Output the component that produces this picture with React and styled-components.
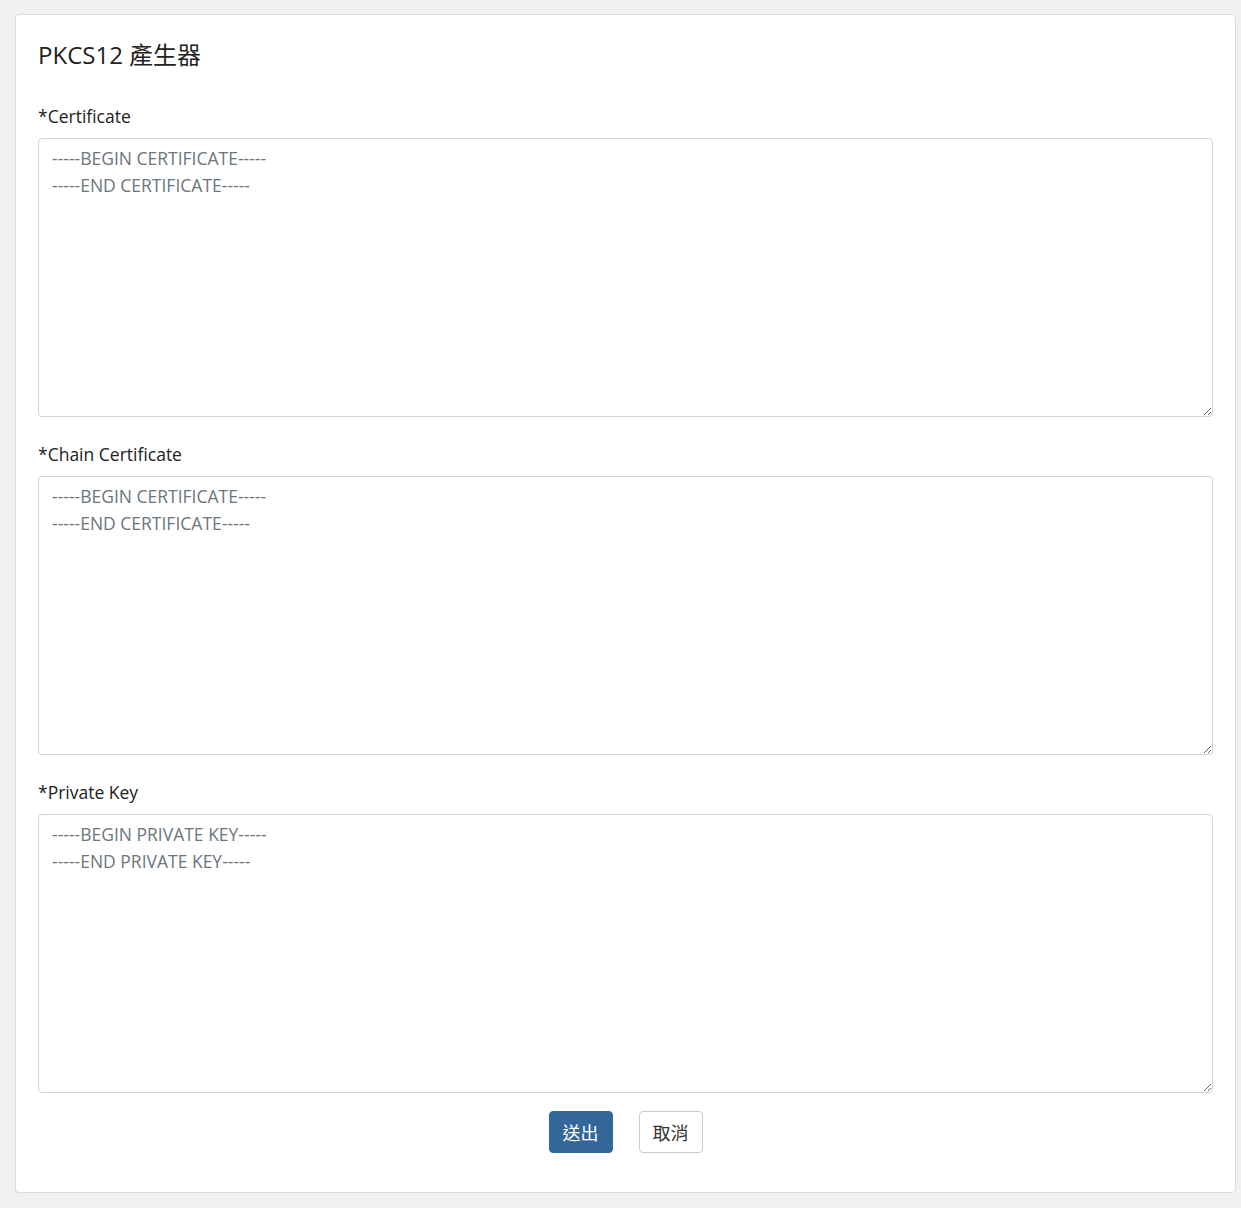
import React from "react";
import styled, { createGlobalStyle } from "styled-components";

const GlobalStyle = createGlobalStyle`
  html, body {
    margin: 0;
    padding: 0;
    background: #f1f1f1;
  }
  body {
    font-family: "Open Sans", "Noto Sans CJK TC", sans-serif;
    color: #333;
  }
  * { box-sizing: border-box; }
`;

const Page = styled.div`
  padding: 14px 5px 15px 15px;
`;

const Card = styled.form`
  background: #fff;
  border: 1px solid #dcdcdc;
  border-radius: 4px;
  padding: 25px 22px 39px 22px;
  display: flex;
  flex-direction: column;
`;

const Title = styled.h1`
  margin: 0 0 34px 0;
  font-size: 24px;
  line-height: 30px;
  font-weight: 400;
  color: #222;
  font-family: "Open Sans", "Noto Sans CJK TC", sans-serif;
`;

const Field = styled.div`
  display: flex;
  flex-direction: column;
  margin-bottom: ${(p) => (p.$last ? "18px" : "25px")};
`;

const Label = styled.label`
  font-size: 17.5px;
  line-height: 24px;
  margin-bottom: 10px;
  color: #222;
`;

const TextArea = styled.textarea`
  display: block;
  width: 100%;
  height: 279px;
  padding: 6px 13px;
  border: 1px solid #ced4da;
  border-radius: 4px;
  font-family: "Open Sans", "Noto Sans CJK TC", sans-serif;
  font-size: 17.5px;
  line-height: 26.5px;
  color: #495057;
  background: #fff;
  resize: vertical;
  outline: none;
  &::placeholder {
    color: #6c757d;
    opacity: 1;
  }
`;

const Actions = styled.div`
  display: flex;
  justify-content: center;
  gap: 26px;
`;

const Button = styled.button`
  height: 42px;
  width: 64px;
  padding: 0;
  border-radius: 4px;
  font-family: "Open Sans", "Noto Sans CJK TC", sans-serif;
  font-size: 18px;
  cursor: pointer;
  border: 1px solid ${(p) => (p.$primary ? "#336699" : "#cccccc")};
  background: ${(p) => (p.$primary ? "#336699" : "#ffffff")};
  color: ${(p) => (p.$primary ? "#ffffff" : "#333333")};
`;

const fields = [
  { id: "cert", label: "*Certificate", ph: "-----BEGIN CERTIFICATE-----\n-----END CERTIFICATE-----" },
  { id: "chain", label: "*Chain Certificate", ph: "-----BEGIN CERTIFICATE-----\n-----END CERTIFICATE-----" },
  { id: "key", label: "*Private Key", ph: "-----BEGIN PRIVATE KEY-----\n-----END PRIVATE KEY-----" },
];

export default function App() {
  return (
    <>
      <GlobalStyle />
      <Page>
        <Card onSubmit={(e) => e.preventDefault()}>
          <Title>PKCS12 產生器</Title>
          {fields.map((f, i) => (
            <Field key={f.id} $last={i === fields.length - 1}>
              <Label htmlFor={f.id}>{f.label}</Label>
              <TextArea id={f.id} placeholder={f.ph} />
            </Field>
          ))}
          <Actions>
            <Button type="submit" $primary>送出</Button>
            <Button type="button">取消</Button>
          </Actions>
        </Card>
      </Page>
    </>
  );
}
